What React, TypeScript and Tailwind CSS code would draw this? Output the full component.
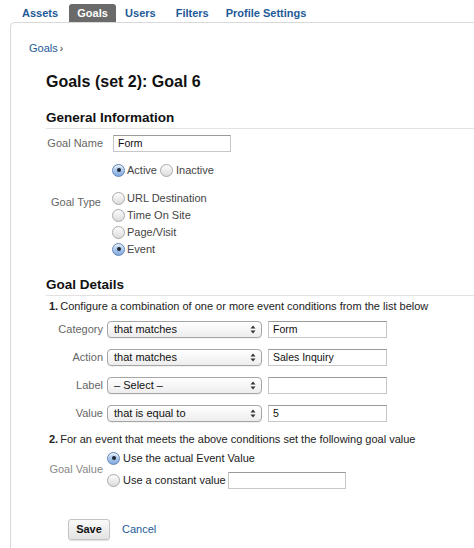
import type { ReactNode } from 'react';

function Radio({ checked }: { checked?: boolean }) {
  return checked ? (
    <span className="flex h-[13px] w-[13px] shrink-0 items-center justify-center rounded-full border border-[#5f82b4] bg-gradient-to-b from-[#d6e6f8] to-[#7fa9df] shadow-[inset_0_1px_1px_rgba(255,255,255,0.7)]">
      <span className="h-[4px] w-[4px] rounded-full bg-[#1d2633]" />
    </span>
  ) : (
    <span className="block h-[13px] w-[13px] shrink-0 rounded-full border border-[#a9a9a9] bg-gradient-to-b from-[#fdfdfd] to-[#dcdcdc]" />
  );
}

function Select({ value }: { value: string }) {
  return (
    <div className="flex h-[17px] w-[155px] items-center justify-between rounded-[4px] border border-[#a6a6a6] bg-gradient-to-b from-white to-[#ededed] pl-[6px] pr-[5px] text-[11px] text-[#111] shadow-[0_1px_0_rgba(0,0,0,0.05)]">
      <span className="leading-none">{value}</span>
      <svg width="6" height="9" viewBox="0 0 6 9">
        <path d="M3 0.5 L5.5 3.5 H0.5 Z" fill="#333" />
        <path d="M3 8.5 L5.5 5.5 H0.5 Z" fill="#333" />
      </svg>
    </div>
  );
}

function TextBox({ value, w }: { value?: string; w: string }) {
  return (
    <div
      className={`flex h-[17px] ${w} items-center border border-[#c7c7c7] border-t-[#9a9a9a] bg-white px-[4px] text-[10.5px] leading-none text-[#111]`}
    >
      {value}
    </div>
  );
}

function Label({ children }: { children: ReactNode }) {
  return <div className="w-[57px] shrink-0 text-right text-[11px] leading-none text-[#666]">{children}</div>;
}

function ConditionRow({ label, op, value }: { label: string; op: string; value?: string }) {
  return (
    <div className="flex h-[18px] items-center">
      <Label>{label}</Label>
      <div className="ml-[4px]">
        <Select value={op} />
      </div>
      <div className="ml-[6px]">
        <TextBox value={value} w="w-[119px]" />
      </div>
    </div>
  );
}

export default function App() {
  return (
    <div className="h-[548px] w-[474px] overflow-hidden bg-white font-['Liberation_Sans',Arial,sans-serif]">
      <div className="flex h-[22px] items-end pl-[22px] text-[11px] font-bold">
        <div className="flex h-[18px] items-center text-[#1d5a98]">Assets</div>
        <div className="ml-[11px] flex h-[18px] w-[47px] items-center justify-center rounded-t-[3px] bg-[#6a6a6a] text-white">
          Goals
        </div>
        <div className="ml-[9px] flex h-[18px] items-center text-[#1d5a98]">Users</div>
        <div className="ml-[20px] flex h-[18px] items-center text-[#1d5a98]">Filters</div>
        <div className="ml-[17px] flex h-[18px] items-center text-[#1d5a98]">Profile Settings</div>
      </div>

      <div className="ml-[10px] h-[526px] rounded-tl-[5px] border-l border-t border-[#d9d9d9]">
        <div className="mt-[17px] flex h-[16px] items-center pl-[18px] text-[11px] text-[#1d5a98]">
          Goals<span className="ml-[2px] text-[10px] text-[#333]">›</span>
        </div>

        <div className="pl-[35px]">
          <h1 className="mt-[16px] flex h-[20px] items-center text-[16px] font-bold text-[#111]">
            Goals (set 2): Goal 6
          </h1>

          <h2 className="mt-[17px] flex h-[20px] items-center border-b border-[#e2e2e2] text-[13.5px] font-bold text-[#111]">
            General Information
          </h2>

          <div className="mt-[6px] flex h-[16px] items-center">
            <Label>Goal Name</Label>
            <div className="ml-[10px]">
              <TextBox value="Form" w="w-[118px]" />
            </div>
          </div>

          <div className="mt-[11px] flex h-[16px] items-center pl-[66px] text-[11px] text-[#444]">
            <Radio checked />
            <span className="ml-[2px]">Active</span>
            <div className="ml-[3px]">
              <Radio />
            </div>
            <span className="ml-[3px]">Inactive</span>
          </div>

          <div className="mt-[12px] flex">
            <div className="pt-[7px]">
              <div className="w-[55px] text-right text-[11px] leading-none text-[#666]">Goal Type</div>
            </div>
            <div className="ml-[11px] flex flex-col gap-[1px] text-[11px] text-[#444]">
              {[
                ['URL Destination', false],
                ['Time On Site', false],
                ['Page/Visit', false],
                ['Event', true],
              ].map(([name, on]) => (
                <div key={name as string} className="flex h-[16px] items-center">
                  <Radio checked={on as boolean} />
                  <span className="ml-[2px]">{name}</span>
                </div>
              ))}
            </div>
          </div>

          <h2 className="mt-[19px] flex h-[20px] items-center border-b border-[#e2e2e2] text-[13.5px] font-bold text-[#111]">
            Goal Details
          </h2>

          <div className="mt-[3px] flex h-[14px] items-center pl-[3px] text-[11px] text-[#222]">
            <span className="font-bold">1.</span>
            <span className="ml-[2px]">Configure a combination of one or more event conditions from the list below</span>
          </div>

          <div className="mt-[7px] flex flex-col gap-[10px]">
            <ConditionRow label="Category" op="that matches" value="Form" />
            <ConditionRow label="Action" op="that matches" value="Sales Inquiry" />
            <ConditionRow label="Label" op="– Select –" />
            <ConditionRow label="Value" op="that is equal to" value="5" />
          </div>

          <div className="mt-[10px] flex h-[14px] items-center pl-[3px] text-[11px] text-[#222]">
            <span className="font-bold">2.</span>
            <span className="ml-[2px]">For an event that meets the above conditions set the following goal value</span>
          </div>

          <div className="mt-[3px] flex items-center">
            <div className="w-[57px] shrink-0 text-right text-[11px] leading-none text-[#888]">Goal Value</div>
            <div className="ml-[4px] flex flex-col gap-[4px] text-[11px] text-[#222]">
              <div className="flex h-[18px] items-center">
                <Radio checked />
                <span className="ml-[3px]">Use the actual Event Value</span>
              </div>
              <div className="flex h-[18px] items-center">
                <Radio />
                <span className="ml-[3px]">Use a constant value</span>
                <div className="ml-[2px]">
                  <TextBox w="w-[118px]" />
                </div>
              </div>
            </div>
          </div>

          <div className="mt-[30px] flex items-center pl-[22px]">
            <button className="h-[21px] w-[42px] rounded-[3px] border border-[#c4c4c4] bg-gradient-to-b from-[#fafafa] to-[#e3e3e3] text-[11px] font-bold text-[#111] shadow-[0_1px_1px_rgba(0,0,0,0.12)]">
              Save
            </button>
            <span className="ml-[12px] text-[11px] text-[#1d5a98]">Cancel</span>
          </div>
        </div>
      </div>
    </div>
  );
}
